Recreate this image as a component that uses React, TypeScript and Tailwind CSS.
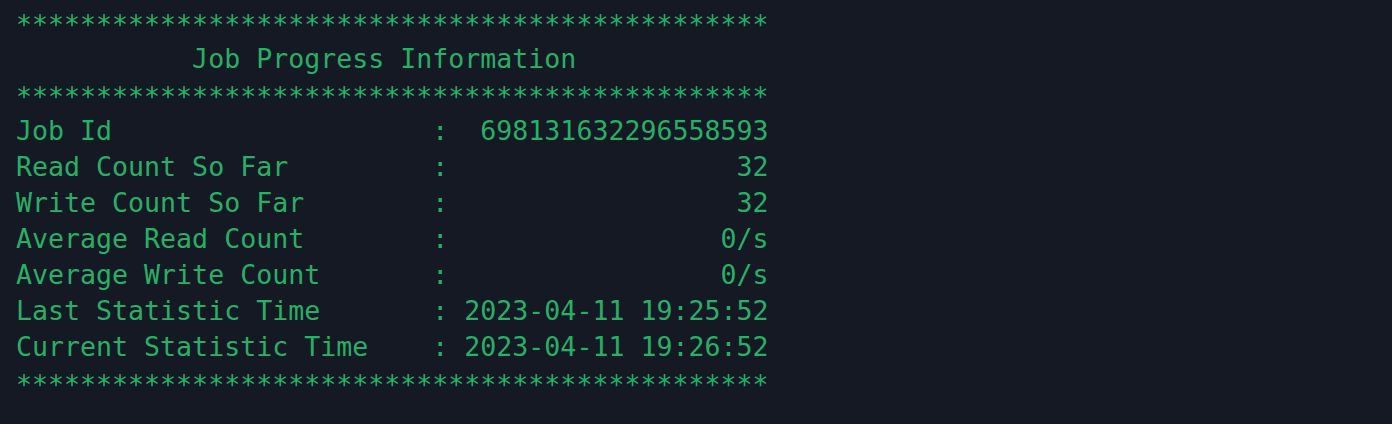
import React from 'react';

// only the descenders of this line show at the top edge
const topLine = 'Submit the new task, see the stages, and check running status: log';
const stars = '***********************************************';

const lines = [
  stars,
  '           Job Progress Information',
  stars,
  'Job Id                    :  698131632296558593',
  'Read Count So Far         :                  32',
  'Write Count So Far        :                  32',
  'Average Read Count        :                 0/s',
  'Average Write Count       :                 0/s',
  'Last Statistic Time       : 2023-04-11 19:25:52',
  'Current Statistic Time    : 2023-04-11 19:26:52',
  stars,
];

const App = () => {
  return (
    <div className="w-[1392px] h-[424px] overflow-hidden bg-[#151923]">
      <pre className="-mt-[35px] pl-4 font-['DejaVu_Sans_Mono',monospace] text-[26.6px] leading-[36px] text-[#27b067] whitespace-pre">
        <div className="leading-[40px]">{topLine}</div>
        {lines.map((line, i) => (
          <div key={i} className={line === stars ? 'pt-[4px] leading-[32px]' : ''}>
            {line}
          </div>
        ))}
      </pre>
    </div>
  );
};

export default App;
